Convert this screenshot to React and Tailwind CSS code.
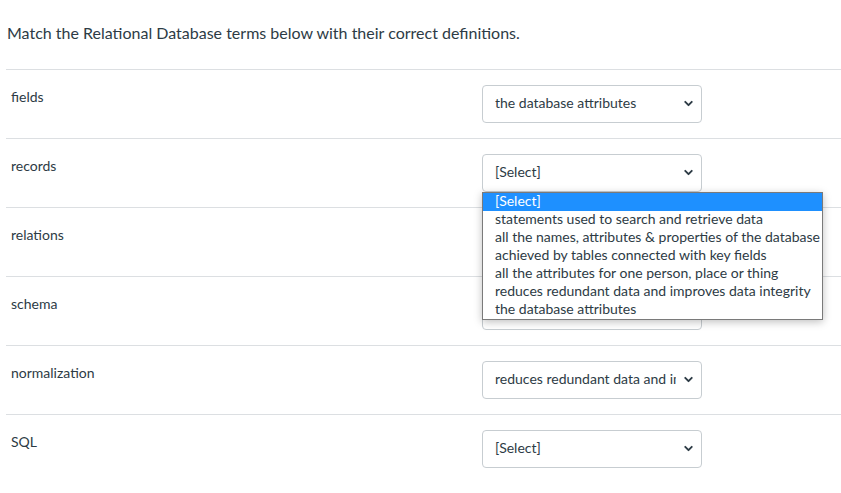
import {ChevronDown} from "lucide-react";

const options = [
    "[Select]",
    "statements used to search and retrieve data",
    "all the names, attributes & properties of the database",
    "achieved by tables connected with key fields",
    "all the attributes for one person, place or thing",
    "reduces redundant data and improves data integrity",
    "the database attributes",
];

const rows = [
    {term: "fields", value: "the database attributes"},
    {term: "records", value: "[Select]", open: true},
    {term: "relations", value: "[Select]"},
    {term: "schema", value: "the database attributes"},
    {term: "normalization", value: "reduces redundant data and improves data integrity"},
    {term: "SQL", value: "[Select]"},
];

const FakeSelect = ({value, open}) => (
    <div className="relative self-start mt-[15px] w-[220px]">
        <div className="flex items-center h-[38px] border border-[#c7cdd1] rounded-[4px] bg-white pl-[12px] pr-[6px] pb-[3px]">
            <span className="flex-1 overflow-hidden whitespace-nowrap text-[14px] text-[#2d3b45]">{value}</span>
            <ChevronDown size={13} strokeWidth={3.5} className="text-[#2d3b45] ml-[6px] mt-[2px] shrink-0"/>
        </div>

        {open && (
            <div className="absolute left-0 top-full z-10 w-[341px] bg-white border border-[#7a7a7a] shadow-[0_2px_8px_rgba(0,0,0,0.25)]">
                {options.map((opt, i) => (
                    <div
                        key={opt}
                        className={
                            i === 0
                                ? "h-[18px] leading-[15px] pl-[12px] text-[14px] bg-[#1e90ff] text-white whitespace-nowrap"
                                : "h-[18px] leading-[15px] pl-[12px] text-[14px] text-[#2d3b45] whitespace-nowrap"
                        }
                    >
                        {opt}
                    </div>
                ))}
            </div>
        )}
    </div>
);

const App = () => {
    return (
        <div className="min-h-[493px] bg-white pl-[6px] font-['Lato','Liberation_Sans',sans-serif] text-[#2d3b45]">
            <div className="h-[69px] pt-[21px] pl-[1px] text-[16px] leading-[24px]">
                Match the Relational Database terms below with their correct definitions.
            </div>

            {rows.map((row) => (
                <div key={row.term} className="flex h-[69px] border-t border-[#dcdfe2]">
                    <div className="w-[476px] pl-[5px] pt-[17px] text-[14px] leading-[20px]">{row.term}</div>
                    <FakeSelect value={row.value} open={row.open}/>
                </div>
            ))}
        </div>
    );
};

export default App;
